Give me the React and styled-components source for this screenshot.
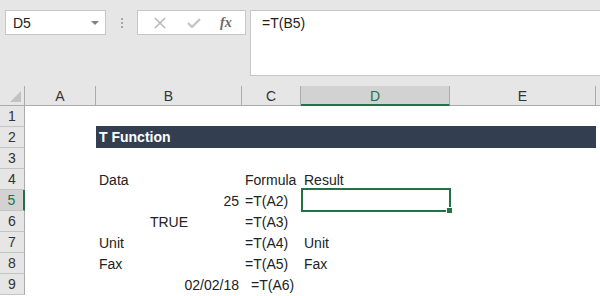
import React from 'react'
import styled, { createGlobalStyle } from 'styled-components'

const GREEN = '#217346'

const cols = ['A', 'B', 'C', 'D', 'E']

// cell contents per row: [A, B, C, D, E]
const rows = [
  { n: 1, cells: [] },
  { n: 2, band: 'T Function' },
  { n: 3, cells: [] },
  { n: 4, cells: [null, { t: 'Data' }, { t: 'Formula' }, { t: 'Result' }] },
  { n: 5, cells: [null, { t: '25', align: 'right' }, { t: '=T(A2)' }, { t: '', selected: true }] },
  { n: 6, cells: [null, { t: 'TRUE', align: 'center' }, { t: '=T(A3)' }] },
  { n: 7, cells: [null, { t: 'Unit' }, { t: '=T(A4)' }, { t: 'Unit' }] },
  { n: 8, cells: [null, { t: 'Fax' }, { t: '=T(A5)' }, { t: 'Fax' }] },
  { n: 9, cells: [null, { t: '02/02/18', align: 'right' }, { t: '=T(A6)', indent: true }] },
]

const App = () => {
  return (
    <>
      <GlobalStyle />
      <Window>
        <FormulaBar>
          <NameBox>
            <span>D5</span>
            <Caret />
          </NameBox>
          <Grip>
            <i /><i /><i />
          </Grip>
          <ButtonBox>
            <svg width="14" height="14" viewBox="0 0 14 14">
              <path d="M2 2 L12 12 M12 2 L2 12" stroke="#b9b9b9" strokeWidth="1.6" fill="none" />
            </svg>
            <svg width="16" height="14" viewBox="0 0 16 14">
              <path d="M2 7 L6 11 L14 3" stroke="#c2c2c2" strokeWidth="2.2" fill="none" />
            </svg>
            <Fx>fx</Fx>
          </ButtonBox>
          <FormulaInput>=T(B5)</FormulaInput>
        </FormulaBar>

        <Sheet>
          <Corner><CornerTri /></Corner>
          {cols.map(c => (
            <ColHead key={c} active={c === 'D'}>{c}</ColHead>
          ))}
          <ColRest />

          {rows.map(r => (
            <React.Fragment key={r.n}>
              <RowHead active={r.n === 5}>{r.n}</RowHead>
              {r.band ? (
                <>
                  <Cell />
                  <Band>{r.band}</Band>
                  <Cell />
                </>
              ) : (
                <>
                  {cols.map((c, i) => {
                    const cell = (r.cells && r.cells[i]) || {}
                    return (
                      <Cell key={c} align={cell.align} indent={cell.indent} selected={cell.selected}>
                        {cell.t}
                      </Cell>
                    )
                  })}
                  <Cell />
                </>
              )}
            </React.Fragment>
          ))}
        </Sheet>
      </Window>
    </>
  )
}

export default App

const GlobalStyle = createGlobalStyle`
  html, body { margin: 0; padding: 0; background: #fff; }
  body { font-family: "Liberation Sans", Arial, sans-serif; }
`

const Window = styled.div`
  width: 600px;
  height: 296px;
  overflow: hidden;
  background: #fff;
`

const FormulaBar = styled.div`
  height: 86px;
  background: #e6e6e6;
  display: flex;
  align-items: flex-start;
  padding-top: 10px;
  box-sizing: border-box;
`

const NameBox = styled.div`
  margin-left: 5px;
  width: 101px;
  height: 25px;
  box-sizing: border-box;
  background: #fff;
  border: 1px solid #c6c6c6;
  display: flex;
  align-items: center;
  justify-content: space-between;
  padding: 0 6px 0 7px;
  font-size: 14px;
  color: #222;
`

const Caret = styled.span`
  width: 0;
  height: 0;
  border-left: 4px solid transparent;
  border-right: 4px solid transparent;
  border-top: 4px solid #808080;
`

const Grip = styled.div`
  width: 31px;
  height: 25px;
  display: flex;
  flex-direction: column;
  align-items: center;
  justify-content: center;
  gap: 2px;
  i {
    width: 2px;
    height: 2px;
    background: #a8a8a8;
  }
`

const ButtonBox = styled.div`
  width: 109px;
  height: 25px;
  box-sizing: border-box;
  background: #fff;
  border: 1px solid #c6c6c6;
  display: flex;
  align-items: center;
  justify-content: space-around;
  padding: 0 4px 0 6px;
`

const Fx = styled.span`
  font-family: "Liberation Serif", "Times New Roman", serif;
  font-style: italic;
  font-weight: bold;
  font-size: 14px;
  color: #6a6a6a;
`

const FormulaInput = styled.div`
  margin-left: 4px;
  flex: 1;
  height: 66px;
  box-sizing: border-box;
  background: #fff;
  border: 1px solid #c6c6c6;
  border-right: none;
  padding: 4px 0 0 11px;
  font-size: 14px;
  color: #222;
`

const Sheet = styled.div`
  display: grid;
  grid-template-columns: 25px 71px 146px 59px 149px 146px 1fr;
  grid-template-rows: 20px repeat(9, 21px);
  font-size: 14px;
  color: #222;
`

const Corner = styled.div`
  background: #e6e6e6;
  border-right: 1px solid #ababab;
  border-bottom: 1px solid #ababab;
  position: relative;
`

const CornerTri = styled.span`
  position: absolute;
  right: 3px;
  bottom: 3px;
  width: 0;
  height: 0;
  border-left: 11px solid transparent;
  border-bottom: 11px solid #c2c2c2;
`

const ColHead = styled.div`
  background: ${p => (p.active ? '#d2d2d2' : '#e6e6e6')};
  color: ${p => (p.active ? GREEN : '#333')};
  border-right: 1px solid #ababab;
  border-bottom: ${p => (p.active ? `2px solid ${GREEN}` : '1px solid #ababab')};
  display: flex;
  align-items: center;
  justify-content: center;
  font-size: 14px;
  padding-top: 1px;
`

const ColRest = styled.div`
  background: #e6e6e6;
  border-bottom: 1px solid #ababab;
`

const RowHead = styled.div`
  background: ${p => (p.active ? '#d2d2d2' : '#e6e6e6')};
  color: ${p => (p.active ? GREEN : '#333')};
  border-right: ${p => (p.active ? `2px solid ${GREEN}` : '1px solid #ababab')};
  border-bottom: 1px solid #c4c4c4;
  display: flex;
  align-items: center;
  justify-content: center;
  font-size: 14px;
`

const Cell = styled.div`
  position: relative;
  display: flex;
  align-items: flex-end;
  justify-content: ${p =>
    p.align === 'right' ? 'flex-end' : p.align === 'center' ? 'center' : 'flex-start'};
  padding: 0 3px 2px ${p => (p.indent ? '9px' : '3px')};
  line-height: 16px;
  white-space: nowrap;
  ${p =>
    p.selected &&
    `
    border: 2px solid ${GREEN};
    margin: -2px -1px -1px 0;
    &::after {
      content: '';
      position: absolute;
      right: -4px;
      bottom: -4px;
      width: 5px;
      height: 5px;
      background: ${GREEN};
      border: 1px solid #fff;
    }
  `}
`

const Band = styled.div`
  grid-column: 3 / 7;
  background: #333f50;
  color: #fff;
  font-weight: bold;
  display: flex;
  align-items: center;
  padding-left: 3px;
  margin-top: -1px;
`
